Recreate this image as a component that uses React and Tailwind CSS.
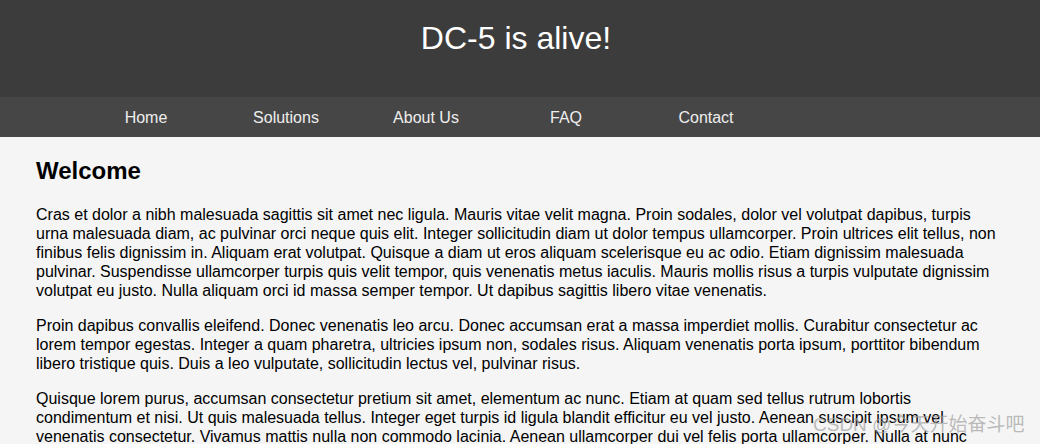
export default function App() {
  const navItems = ['Home', 'Solutions', 'About Us', 'FAQ', 'Contact'];

  return (
    <div className="relative h-[444px] overflow-hidden bg-[#f5f5f5] text-black font-['Liberation_Sans',Arial,sans-serif]">
      <header className="h-[97px] bg-[#3c3c3c] flex items-start justify-center">
        <h1 className="mt-[20px] text-[32px] leading-[37px] text-white font-normal -translate-x-[4px]">DC-5 is alive!</h1>
      </header>

      <nav className="h-[40px] bg-[#464646] flex items-center pl-[76px] pt-[1px]">
        {navItems.map((item) => (
          <a key={item} href="#" className="w-[140px] text-center text-[16px] text-[#eeeeee]">
            {item}
          </a>
        ))}
      </nav>

      <main className="px-[36px] pt-[20px] pb-4 text-[16px] leading-[19px]">
        <h2 className="text-[24px] leading-[27.6px] font-bold mb-[20px]">Welcome</h2>
        <p className="mb-4">
          Cras et dolor a nibh malesuada sagittis sit amet nec ligula. Mauris vitae velit magna. Proin sodales, dolor vel volutpat dapibus, turpis urna malesuada diam, ac pulvinar orci neque quis elit. Integer sollicitudin diam ut dolor tempus ullamcorper. Proin ultrices elit tellus, non finibus felis dignissim in. Aliquam erat volutpat. Quisque a diam ut eros aliquam scelerisque eu ac odio. Etiam dignissim malesuada pulvinar. Suspendisse ullamcorper turpis quis velit tempor, quis venenatis metus iaculis. Mauris mollis risus a turpis vulputate dignissim volutpat eu justo. Nulla aliquam orci id massa semper tempor. Ut dapibus sagittis libero vitae venenatis.
        </p>
        <p className="mb-4">
          Proin dapibus convallis eleifend. Donec venenatis leo arcu. Donec accumsan erat a massa imperdiet mollis. Curabitur consectetur ac lorem tempor egestas. Integer a quam pharetra, ultricies ipsum non, sodales risus. Aliquam venenatis porta ipsum, porttitor bibendum libero tristique quis. Duis a leo vulputate, sollicitudin lectus vel, pulvinar risus.
        </p>
        <p className="mb-4">
          Quisque lorem purus, accumsan consectetur pretium sit amet, elementum ac nunc. Etiam at quam sed tellus rutrum lobortis condimentum et nisi. Ut quis malesuada tellus. Integer eget turpis id ligula blandit efficitur eu vel justo. Aenean suscipit ipsum vel venenatis consectetur. Vivamus mattis nulla non commodo lacinia. Aenean ullamcorper dui vel felis porta ullamcorper. Nulla at nunc
        </p>
      </main>

      <div className="absolute left-[813px] top-[413px] text-[19px] leading-[23px] text-[#a0a0a0]/70 font-['Liberation_Sans','Noto_Sans_CJK_SC',sans-serif] whitespace-nowrap pointer-events-none">
        CSDN @今天开始奋斗吧
      </div>
    </div>
  );
}
